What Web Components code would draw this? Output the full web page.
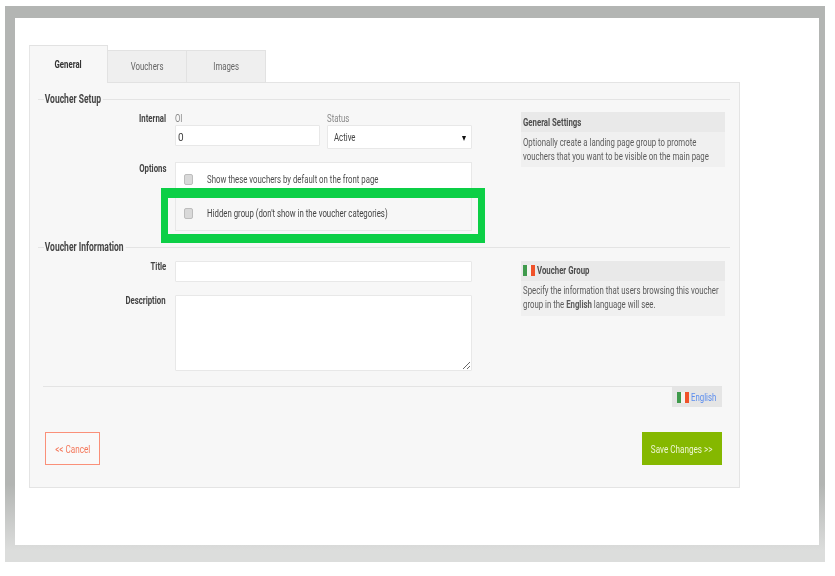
<!DOCTYPE html>
<html>
<head>
<meta charset="utf-8">
<title>Voucher group</title>
<style>
  html, body { margin: 0; background: #fff; }
  body { font-family: Roboto, "Liberation Sans", sans-serif; font-size: 11px; color: #4d4d4d; }
</style>
</head>
<body>
<v-frame>
  <v-tabs>
    <v-tab active>General</v-tab>
    <v-tab>Vouchers</v-tab>
    <v-tab>Images</v-tab>
  </v-tabs>
  <v-panel>
    <v-section title="Voucher Setup" style="--lt:1px">
      <v-row label="Internal">
        <v-fields>
          <v-input label="OI" value="0"></v-input>
          <v-select label="Status" value="Active"></v-select>
        </v-fields>
      </v-row>
      <v-row label="Options" style="margin-top:13px">
        <v-options>
          <v-check>Show these vouchers by default on the front page</v-check>
          <v-check alt>Hidden group (don't show in the voucher categories)</v-check>
        </v-options>
      </v-row>
      <v-help slot="help" title="General Settings" style="--pt:4px">
        <v-t>Optionally create a landing page group to promote</v-t><br>
        <v-t>vouchers that you want to be visible on the main page</v-t>
      </v-help>
    </v-section>
    <v-section title="Voucher Information" style="margin-top:9px;--gap:7px">
      <v-row label="Title"><v-input wide></v-input></v-row>
      <v-row label="Description" style="margin-top:13px"><v-area></v-area></v-row>
      <v-help slot="help" title="Voucher Group" flag style="--hb:1px">
        <v-t>Specify the information that users browsing this voucher</v-t><br>
        <v-t>group in the <b>English</b> language will see.</v-t>
      </v-help>
    </v-section>
    <v-lang>English</v-lang>
    <v-actions>
      <v-btn kind="cancel">&lt;&lt; Cancel</v-btn>
      <v-btn kind="save">Save Changes &gt;&gt;</v-btn>
    </v-actions>
  </v-panel>
  <v-mark></v-mark>
</v-frame>

<script>
  // tiny helper so every element below is just a style + markup string
  function define(tag, css, html) {
    customElements.define(tag, class extends HTMLElement {
      constructor() {
        super();
        this.attachShadow({mode: 'open'});
      }
      connectedCallback() {
        const attr = (n, d = '') => this.getAttribute(n) ?? d;
        const body = typeof html === 'function' ? html(attr, this) : html;
        this.shadowRoot.innerHTML = `<style>${css}</style>${body}`;
      }
    });
  }

  const flag = `<svg width="12" height="11" viewBox="0 0 12 11" style="display:block;flex:none">
    <rect width="4" height="11" fill="#3f9a4c"/><rect x="4" width="4" height="11" fill="#f4f4f0"/><rect x="8" width="4" height="11" fill="#f0522a"/></svg>`;

  // the screenshot is squashed sideways, so the text gets squeezed the same way
  define('v-t', `
    :host{display:inline-block;white-space:nowrap;transform:scaleX(var(--sx,.71));transform-origin:var(--ox,left);}
  `, `<slot></slot>`);

  define('v-frame', `
    :host{display:block;width:820px;height:556px;margin:6px 0 0 5px;box-sizing:border-box;padding:12px 6px 17px 10px;
      background:linear-gradient(#b3b5b3 0,#b3b5b3 86%,#dcdddc 98%,#dcdddc 100%);filter:blur(.35px);}
    .inner{height:100%;box-sizing:border-box;background:#fff;padding:27px 0 0 14px;position:relative;}
  `, `<div class="inner"><slot></slot></div>`);

  define('v-tabs', `
    :host{display:flex;align-items:flex-end;height:38px;margin-bottom:-1px;position:relative;z-index:1;}
  `, `<slot></slot>`);

  define('v-tab', `
    :host{display:flex;width:79px;height:33px;box-sizing:border-box;align-items:center;justify-content:center;
      background:#efefef;border:1px solid #e2e2e2;border-left:0;color:#666;--ox:center;}
    :host([active]){height:38px;background:#f7f7f7;border-left:1px solid #e6e6e6;border-bottom:0;color:#333;font-weight:700;padding-bottom:1px;}
  `, `<v-t><slot></slot></v-t>`);

  define('v-panel', `
    :host{display:block;width:711px;height:406px;box-sizing:border-box;background:#f7f7f7;border:1px solid #e4e4e4;padding:9px 9px 0 8px;}
  `, `<slot></slot>`);

  define('v-section', `
    :host{display:block;}
    .legend{height:14px;line-height:14px;padding-left:6px;font-size:12px;font-weight:700;color:#444;
      background:linear-gradient(#e4e4e4,#e4e4e4) 0 7px/100% 1px no-repeat;}
    .legend span{background:#f7f7f7;padding:0 3px 0 1px;display:inline-block;}
    .grid{display:grid;grid-template-columns:434px 204px;column-gap:49px;padding-top:var(--gap,6px);}
  `, (a) => `<div class="legend"><v-t><span>${a('title')}</span></v-t></div>
    <div class="grid"><div><slot></slot></div><div><slot name="help"></slot></div></div>`);

  define('v-row', `
    :host{display:grid;grid-template-columns:128px 297px;column-gap:9px;align-items:start;}
    .l{text-align:right;font-weight:700;color:#444;line-height:12px;--ox:right;padding-top:var(--lt,0);}
  `, (a) => `<div class="l"><v-t>${a('label')}</v-t></div><div><slot></slot></div>`);

  define('v-fields', `:host{display:flex;gap:7px;height:37px;}`, `<slot></slot>`);

  const small = `.cap{display:block;height:13px;line-height:14px;color:#888;}`;
  const box = `background:#fff;border:1px solid #e8e8e8;box-sizing:border-box;outline:none;border-radius:1px;`;

  define('v-input', `
    :host{display:block;width:145px;}
    :host([wide]){width:297px;}
    ${small}
    input{display:block;width:100%;height:21px;padding:3px 2px 0;${box}font:10px Roboto,sans-serif;color:#444;}
  `, (a) => `${a('label') ? `<v-t class="cap">${a('label')}</v-t>` : ''}<input value="${a('value')}">`);

  define('v-select', `
    :host{display:block;width:145px;}
    ${small}
    .sel{position:relative;height:24px;line-height:24px;padding-left:6px;${box}color:#444;}
    .arrow{position:absolute;right:5px;top:10px;width:0;height:0;border:2.5px solid transparent;border-top:5px solid #111;border-bottom:0;}
  `, (a) => `<v-t class="cap">${a('label')}</v-t><div class="sel" role="combobox"><v-t>${a('value')}</v-t><i class="arrow"></i></div>`);

  define('v-options', `
    :host{display:block;height:69px;box-sizing:border-box;background:#fff;border:1px solid #e8e8e8;}
  `, `<slot></slot>`);

  define('v-check', `
    :host{display:flex;align-items:center;height:34px;box-sizing:border-box;padding:0 0 2px 8px;color:#4d4d4d;background:#fff;}
    :host([alt]){background:#f7f7f7;height:33px;border-top:1px solid #e8e8e8;color:#444;}
    .box{width:9px;height:11px;flex:none;box-sizing:border-box;background:#d9d9d9;border:1px solid #bdbdbd;border-radius:2px;margin-right:14px;}
  `, `<i class="box"></i><v-t><slot></slot></v-t>`);

  define('v-area', `
    :host{display:block;}
    textarea{display:block;width:297px;height:76px;${box}resize:vertical;}
  `, `<textarea></textarea>`);

  define('v-help', `
    :host{display:block;background:#f0f0f0;height:55px;color:#5c5c5c;}
    .h{display:flex;align-items:center;gap:2px;height:20px;box-sizing:border-box;padding:0 0 var(--hb,0) 2px;background:#e9e9e9;font-weight:700;color:#4d4d4d;}
    .b{padding:var(--pt,3px) 0 0 2px;line-height:14px;}
  `, (a, el) => `<div class="h">${el.hasAttribute('flag') ? flag : ''}<v-t>${a('title')}</v-t></div><div class="b"><slot></slot></div>`);

  define('v-lang', `
    :host{display:block;height:20px;margin:15px 8px 0 5px;border-top:1px solid #e4e4e4;position:relative;}
    .tab{position:absolute;right:0;top:0;width:50px;height:20px;box-sizing:border-box;background:#e5e5e5;display:flex;align-items:center;gap:2px;padding-left:5px;color:#5b8dee;}
  `, `<div class="tab">${flag}<v-t><slot></slot></v-t></div>`);

  define('v-actions', `
    :host{display:flex;justify-content:space-between;margin:25px 8px 0 7px;}
  `, `<slot></slot>`);

  define('v-btn', `
    :host{display:flex;align-items:center;justify-content:center;height:33px;box-sizing:border-box;padding-top:2px;--ox:center;--sx:.74;}
    :host([kind=cancel]){width:55px;border:1.5px solid #fa9079;color:#f4775a;background:#f9f9f9;}
    :host([kind=save]){width:80px;background:#85b800;color:#eef6d2;}
  `, `<v-t><slot></slot></v-t>`);

  // green highlight drawn on top of the screenshot
  define('v-mark', `
    :host{position:absolute;left:146px;top:170px;width:324px;height:55px;box-sizing:border-box;
      border:solid #0ccf46;border-width:10px 7px 9px;pointer-events:none;}
  `, ``);
</script>
</body>
</html>
